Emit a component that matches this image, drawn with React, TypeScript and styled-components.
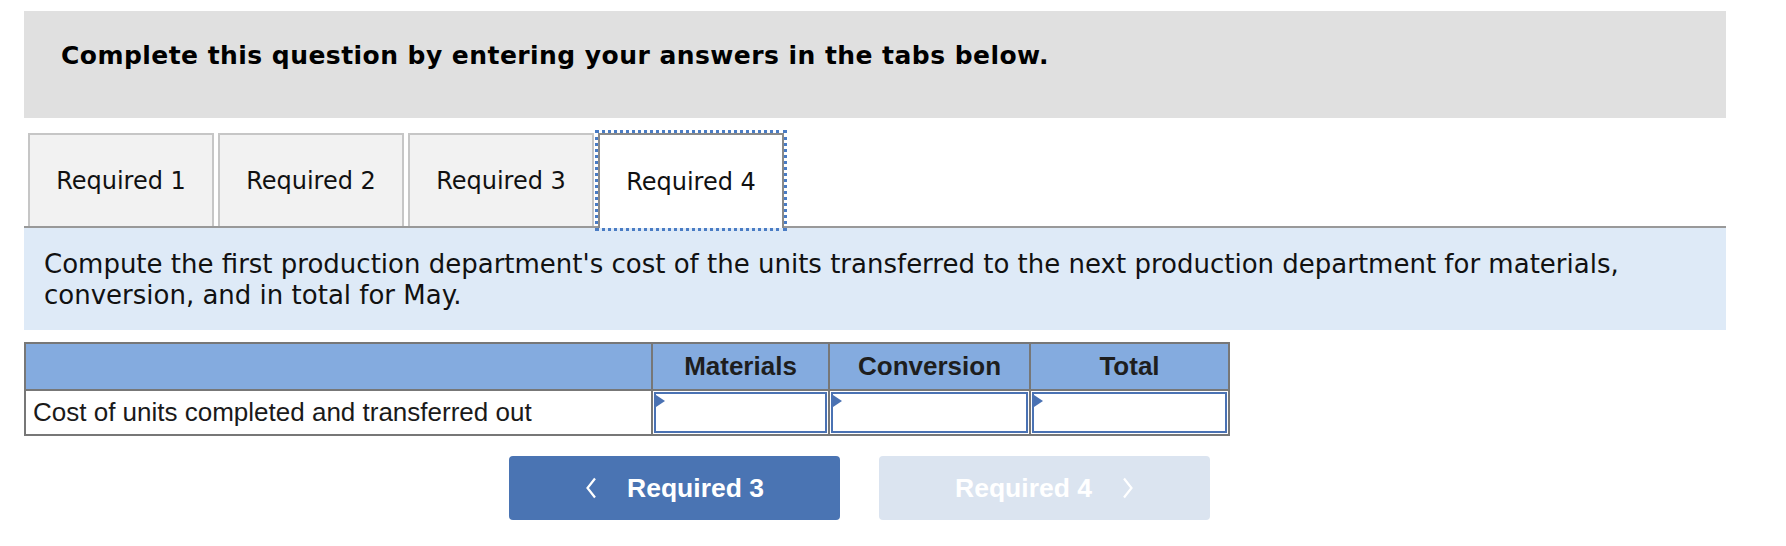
import React from "react";
import styled, { createGlobalStyle } from "styled-components";

const GlobalStyle = createGlobalStyle`
  html, body {
    margin: 0;
    padding: 0;
    background: #ffffff;
  }
  body {
    font-family: "DejaVu Sans", Verdana, sans-serif;
    color: #111;
  }
`;

const Page = styled.div`
  padding: 11px 0 0 24px;
  width: 1702px;
`;

const Banner = styled.div`
  box-sizing: border-box;
  height: 107px;
  background: #e0e0e0;
  padding: 30px 37px 0;
  font-family: "DejaVu Sans", Verdana, sans-serif;
  font-weight: bold;
  font-size: 25px;
  letter-spacing: 0.45px;
  color: #000;
`;

const TabBar = styled.div`
  display: flex;
  align-items: flex-end;
  gap: 4px;
  margin-top: 15px;
  padding-left: 4px;
  border-bottom: 2px solid #999999;
`;

const Tab = styled.div<{ $active?: boolean }>`
  box-sizing: border-box;
  width: 186px;
  height: ${(p) => (p.$active ? "95px" : "93px")};
  margin-bottom: ${(p) => (p.$active ? "-2px" : "0")};
  display: flex;
  align-items: center;
  justify-content: center;
  padding-top: 1px;
  font-family: "DejaVu Sans", Verdana, sans-serif;
  font-size: 24px;
  color: #111;
  background: ${(p) => (p.$active ? "#ffffff" : "#f2f2f2")};
  border: 2px solid ${(p) => (p.$active ? "#8a8a8a" : "#c6c6c6")};
  border-bottom: none;
  outline: ${(p) => (p.$active ? "3px dotted #4a7cc4" : "none")};
  position: relative;
  z-index: ${(p) => (p.$active ? 1 : 0)};
`;

const Instructions = styled.div`
  background: #deeaf7;
  padding: 21px 20px 19px 20px;
  font-family: "DejaVu Sans", Verdana, sans-serif;
  font-size: 26px;
  line-height: 31px;
  color: #111;
`;

const Table = styled.table`
  margin-top: 12px;
  border-collapse: collapse;
  border: 2px solid #777777;
  table-layout: fixed;
  width: 1204px;
  font-family: "Liberation Sans", Arial, sans-serif;
`;

const HeadCell = styled.th<{ $w: number }>`
  width: ${(p) => p.$w}px;
  height: 45px;
  padding: 0;
  background: #84abdf;
  border: 2px solid #777777;
  font-size: 26px;
  font-weight: bold;
  color: #1e1e1e;
  text-align: center;
`;

const LabelCell = styled.td`
  height: 41px;
  padding: 0 0 0 7px;
  border: 2px solid #777777;
  font-size: 26px;
  color: #1a1a1a;
  white-space: nowrap;
`;

const InputCell = styled.td`
  padding: 1px;
  border: 2px solid #777777;
  position: relative;
`;

const AmountInput = styled.input`
  display: block;
  box-sizing: border-box;
  width: 100%;
  height: 41px;
  border: 2px solid #4a72b3;
  background: #fff;
  outline: none;
  padding: 0 8px;
  font-family: "Liberation Sans", Arial, sans-serif;
  font-size: 22px;
  text-align: right;
`;

const Marker = styled.span`
  position: absolute;
  left: 3px;
  top: 4px;
  width: 0;
  height: 0;
  border-top: 6px solid transparent;
  border-bottom: 6px solid transparent;
  border-left: 9px solid #4a72b3;
  pointer-events: none;
`;

const NavRow = styled.div`
  display: flex;
  gap: 39px;
  margin-top: 20px;
  padding-left: 485px;
`;

const NavButton = styled.button<{ $disabled?: boolean }>`
  box-sizing: border-box;
  width: 331px;
  height: 64px;
  border: none;
  border-radius: 4px;
  background: ${(p) => (p.$disabled ? "#dbe4f0" : "#4a74b3")};
  color: #ffffff;
  font-family: "Liberation Sans", Arial, sans-serif;
  font-weight: bold;
  font-size: 26.5px;
  display: flex;
  align-items: center;
  justify-content: center;
  gap: 30px;
  padding: 0;
  cursor: ${(p) => (p.$disabled ? "default" : "pointer")};
`;

const Chevron = ({ dir }: { dir: "left" | "right" }) => (
  <svg width="12" height="22" viewBox="0 0 12 22" aria-hidden="true">
    <path
      d={dir === "left" ? "M10 1.5 L2.5 11 L10 20.5" : "M2 1.5 L9.5 11 L2 20.5"}
      fill="none"
      stroke="#ffffff"
      strokeWidth="2.2"
      strokeLinejoin="miter"
    />
  </svg>
);

const tabs = ["Required 1", "Required 2", "Required 3", "Required 4"];
const columns = [
  { label: "Materials", w: 175 },
  { label: "Conversion", w: 199 },
  { label: "Total", w: 197 },
];

export default function App() {
  return (
    <>
      <GlobalStyle />
      <Page>
        <Banner>Complete this question by entering your answers in the tabs below.</Banner>
        <TabBar>
          {tabs.map((t, i) => (
            <Tab key={t} $active={i === 3}>
              {t}
            </Tab>
          ))}
        </TabBar>
        <Instructions>
          Compute the first production department's cost of the units transferred to the next
          production department for materials, conversion, and in total for May.
        </Instructions>
        <Table>
          <thead>
            <tr>
              <HeadCell $w={625} />
              {columns.map((c) => (
                <HeadCell key={c.label} $w={c.w}>
                  {c.label}
                </HeadCell>
              ))}
            </tr>
          </thead>
          <tbody>
            <tr>
              <LabelCell>Cost of units completed and transferred out</LabelCell>
              {columns.map((c) => (
                <InputCell key={c.label}>
                  <AmountInput type="text" aria-label={c.label} />
                  <Marker />
                </InputCell>
              ))}
            </tr>
          </tbody>
        </Table>
        <NavRow>
          <NavButton>
            <Chevron dir="left" />
            Required 3
          </NavButton>
          <NavButton $disabled>
            Required 4
            <Chevron dir="right" />
          </NavButton>
        </NavRow>
      </Page>
    </>
  );
}
